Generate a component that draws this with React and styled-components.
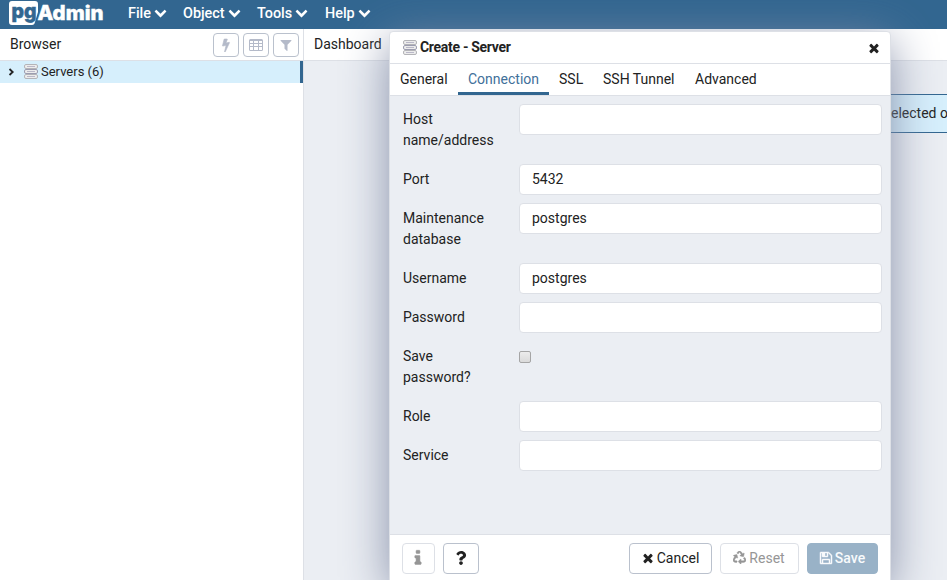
import React from "react";
import styled, { createGlobalStyle } from "styled-components";
import { FaRecycle, FaQuestion } from "react-icons/fa";

const Global = createGlobalStyle`
  * { box-sizing: border-box; }
  body { margin: 0; font: 14px/21px Roboto, sans-serif; color: #222; overflow: hidden; }
`;

const Page = styled.div`
  position: relative;
  width: 947px;
  height: 580px;
  overflow: hidden;
  display: flex;
  flex-direction: column;
  background: #fff;
`;

const MenuBar = styled.header`
  height: 29px;
  flex: none;
  display: flex;
  align-items: flex-start;
  background: #326690;
  color: #fff;
`;

const LogoSvg = styled.svg`
  flex: none;
  width: 128px;
  height: 29px;
`;

const MenuItem = styled.div`
  width: ${(p) => p.$width}px;
  height: 26px;
  display: flex;
  align-items: center;
  gap: 3px;
  font-weight: 500;
  font-size: 14.4px;
`;

const Glyph = styled.svg`
  display: block;
  flex: none;
  width: ${(p) => p.$w || p.$size}px;
  height: ${(p) => p.$size}px;
  fill: currentColor;
`;

const MenuChevron = styled(Glyph)`
  margin-top: -2px;
`;

const Workspace = styled.div`
  flex: 1;
  display: flex;
  min-height: 0;
`;

const Browser = styled.aside`
  width: 304px;
  flex: none;
  border-right: 1px solid #dde0e6;
`;

const PanelHeader = styled.div`
  height: 32px;
  display: flex;
  align-items: center;
  padding: 0 4px 1px 10px;
  background: #fff;
  border-bottom: 1px solid #dde0e6;
`;

const PanelTitle = styled.div`
  flex: 1;
`;

const Tools = styled.div`
  display: flex;
  gap: 4px;
`;

const ToolButton = styled.button`
  width: 26px;
  height: 24px;
  margin-top: 2px;
  padding: 0;
  display: grid;
  place-items: center;
  color: #b4bac9;
  background: #fff;
  border: 1px solid #bac1cd;
  border-radius: 4px;
`;

const TreeRow = styled.div`
  height: 22px;
  display: flex;
  align-items: center;
  padding: 0 0 1px 7px;
  background: #d6effc;
  border-right: 3px solid #326690;
  font-size: 13px;
`;

const TreeLabel = styled.span`
  margin-left: 3px;
`;

const TreeArrow = styled.span`
  width: 17px;
  display: flex;
  color: #222;
`;

const Content = styled.main`
  flex: 1;
  min-width: 0;
  background: #ebeef3;
`;

const Alert = styled.div`
  height: 39px;
  margin: 33px -20px 0 120px;
  padding: 8px 0 0 466px;
  white-space: nowrap;
  background: #d6effc;
  border: 1px solid #326690;
`;

const Dialog = styled.section`
  position: absolute;
  left: 389px;
  top: 31px;
  width: 502px;
  height: 553px;
  display: flex;
  flex-direction: column;
  background: #fff;
  border: 1px solid #dde0e6;
  border-radius: 4px;
  box-shadow: 0 10px 48px -1px #848da7;
`;

const DialogHeader = styled.div`
  height: 32px;
  flex: none;
  display: flex;
  align-items: center;
  padding: 0 9px 0 13px;
  border-bottom: 1px solid #dde0e6;
`;

const DialogTitle = styled.div`
  flex: 1;
  margin-left: 3px;
  font-weight: 700;
  letter-spacing: -0.3px;
`;

const TabBar = styled.nav`
  height: 32px;
  flex: none;
  display: flex;
  border-bottom: 1px solid #dde0e6;
`;

const Tab = styled.div`
  height: 31px;
  width: ${(p) => p.$width}px;
  padding: 5px 0 0 10px;
  white-space: nowrap;
  color: ${(p) => (p.$active ? "#41709a" : "#222")};
  border-bottom: ${(p) => (p.$active ? "3px solid #326690" : "none")};
`;

const Form = styled.div`
  flex: 1;
  display: flex;
  flex-direction: column;
  gap: 8px;
  padding: 8px 8px 0 13px;
  background: #ebeef3;
`;

const Field = styled.label`
  display: grid;
  grid-template-columns: 116px 1fr;
  align-items: start;
`;

const FieldLabel = styled.span`
  width: 100px;
  padding: 5px 0;
`;

const TextBox = styled.input`
  width: 100%;
  height: 31px;
  padding: 0 12px 2px;
  font: 14px Roboto, sans-serif;
  color: #222;
  background: #fff;
  border: 1px solid #dde0e6;
  border-radius: 4px;
  outline: none;
`;

const CheckBox = styled.input`
  appearance: none;
  width: 12px;
  height: 12px;
  margin: 10px 0 0;
  background: linear-gradient(#ececec, #dadada);
  border: 1px solid #a5a5a5;
  border-radius: 2px;
`;

const Footer = styled.div`
  height: 49px;
  flex: none;
  display: flex;
  gap: 8px;
  padding: 8px 12px 0;
  border-top: 1px solid #dde0e6;
`;

const Spacer = styled.div`
  flex: 1;
`;

const variants = {
  normal: "color:#222;background:#fff;border-color:#bac1cd;",
  disabled: "color:#969696;background:#fff;border-color:#dde0e6;",
  primary: "color:#f8fafc;background:#99b2c7;border-color:#99b2c7;",
};

const Button = styled.button`
  width: ${(p) => p.$width}px;
  height: 31px;
  padding: 0 1px 2px 0;
  display: flex;
  align-items: center;
  justify-content: center;
  gap: 2px;
  font: ${(p) => (p.$variant === "primary" ? 500 : 400)} 14px Roboto, sans-serif;
  border: 1px solid;
  border-radius: 4px;
  ${(p) => variants[p.$variant]}
`;

const RecycleIcon = styled(FaRecycle)`
  width: 13px;
  height: 13px;
  margin: 0 1px 1px 0;
  stroke: currentColor;
  stroke-width: 16;
`;

const paths = {
  bolt: "M1333 566q18 20 7 44l-540 1157q-13 25-42 25-4 0-14-2-17-5-25.500-19t-4.500-30l197-808-406 101q-4 1-12 1-18 0-31-11-18-15-13-39l201-825q4-14 16-23t28-9h328q19 0 32 12.500t13 29.500q0 8-5 18l-171 463 396-98q8-2 12-2 19 0 34 15z",
  down: "M1683 808l-742 741q-19 19-45 19t-45-19l-742-741q-19-19-19-45.500t19-45.500l166-165q19-19 45-19t45 19l531 531 531-531q19-19 45-19t45 19l166 165q19 19 19 45.500t-19 45.500z",
  times: "M1490 1322q0 40-28 68l-136 136q-28 28-68 28t-68-28l-294-294-294 294q-28 28-68 28t-68-28l-136-136q-28-28-28-68t28-68l294-294-294-294q-28-28-28-68t28-68l136-136q28-28 68-28t68 28l294 294 294-294q28-28 68-28t68 28l136 136q28 28 28 68t-28 68l-294 294 294 294q28 28 28 68z",
  filter: "M1595 295q17 41-14 70l-493 493v742q0 42-39 59-13 5-25 5-27 0-45-19l-256-256q-19-19-19-45v-486l-493-493q-31-29-14-70 17-39 59-39h1280q42 0 59 39z",
  info: "M1216 1344v128q0 26-19 45t-45 19h-512q-26 0-45-19t-19-45v-128q0-26 19-45t45-19h64v-384h-64q-26 0-45-19t-19-45v-128q0-26 19-45t45-19h384q26 0 45 19t19 45v576h64q26 0 45 19t19 45zm-128-1152v192q0 26-19 45t-45 19h-256q-26 0-45-19t-19-45v-192q0-26 19-45t45-19h256q26 0 45 19t19 45z",
  save: "M512 1536h768v-384h-768v384zm896 0h128v-896q0-14-10-38.500t-20-34.500l-281-281q-10-10-34-20t-39-10v416q0 40-28 68t-68 28h-576q-40 0-68-28t-28-68v-416h-128v1280h128v-416q0-40 28-68t68-28h832q40 0 68 28t28 68v416zm-384-928v-320q0-13-9.500-22.500t-22.500-9.500h-192q-13 0-22.500 9.500t-9.500 22.500v320q0 13 9.500 22.500t22.500 9.500h192q13 0 22.500-9.500t9.500-22.500zm640 32v928q0 40-28 68t-68 28h-1344q-40 0-68-28t-28-68v-1344q0-40 28-68t68-28h928q40 0 88 20t76 48l280 280q28 28 48 76t20 88z",
};

const Icon = ({ name, size = 14, stroke = 0, as: Box = Glyph }) => (
  <Box viewBox="0 0 1792 1792" $size={size}>
    <path d={paths[name]} stroke="currentColor" strokeWidth={stroke} />
  </Box>
);

const TableIcon = () => (
  <Glyph viewBox="0 0 14 12" $w={14} $size={12}>
    <path
      fillRule="evenodd"
      d="M1.500 0h11A1.500 1.500 0 0 1 14 1.500v9a1.500 1.500 0 0 1-1.500 1.500h-11A1.500 1.500 0 0 1 0 10.500v-9A1.500 1.500 0 0 1 1.500 0zM1 2v2h3V2zm4 0v2h4V2zm5 0v2h3V2zM1 5v2h3V5zm4 0v2h4V5zm5 0v2h3V5zM1 8v3h3V8zm4 0v3h4V8zm5 0v3h3V8z"
    />
  </Glyph>
);

const ServerIcon = () => (
  <Glyph viewBox="0 0 14 15" $w={14} $size={15}>
    {[0.5, 5.5, 10.5].map((y, i) => (
      <g key={y}>
        <rect x="0.5" y={y} width="13" height="4" rx="1.5" fill="#ececec" stroke={i === 1 ? "#9c9db0" : "#b4b4b8"} />
        <path d={`M3 ${y + 2}h8`} stroke="#bab8c8" strokeWidth="1" />
      </g>
    ))}
  </Glyph>
);

const Logo = () => (
  <LogoSvg viewBox="0 0 128 29">
    <path d="M12 1h23q3 0 3 3v8l-3 10q-.5 3-3 3H12q-3 0-3-3V4q0-3 3-3z" fill="#fff" />
    <text x="11.500" y="17.500" fontFamily="Inter, sans-serif" fontWeight="800" fontSize="20" fill="#326690" stroke="#326690" strokeWidth="0.600" textLength="25" lengthAdjust="spacingAndGlyphs">pg</text>
    <text x="37.500" y="19.500" fontFamily="Inter, sans-serif" fontWeight="800" fontSize="20" fill="#fff" stroke="#fff" strokeWidth="0.500" textLength="66" lengthAdjust="spacingAndGlyphs">Admin</text>
  </LogoSvg>
);

const menus = [["File", 55], ["Object", 74], ["Tools", 68], ["Help", 60]];
const tabs = [["General", 68], ["Connection", 91], ["SSL", 44], ["SSH Tunnel", 92], ["Advanced", 90]];
const fields = [
  ["Host name/address", ""],
  ["Port", "5432"],
  ["Maintenance database", "postgres"],
  ["Username", "postgres"],
  ["Password", ""],
  ["Save password?", null],
  ["Role", ""],
  ["Service", ""],
];

export default function App() {
  return (
    <>
      <Global />
      <Page>
        <MenuBar>
          <Logo />
          {menus.map(([label, width]) => (
            <MenuItem key={label} $width={width}>
              {label}
              <Icon name="down" size={13} as={MenuChevron} />
            </MenuItem>
          ))}
        </MenuBar>
        <Workspace>
          <Browser>
            <PanelHeader>
              <PanelTitle>Browser</PanelTitle>
              <Tools>
                <ToolButton><Icon name="bolt" stroke={80} /></ToolButton>
                <ToolButton><TableIcon /></ToolButton>
                <ToolButton><Icon name="filter" /></ToolButton>
              </Tools>
            </PanelHeader>
            <TreeRow>
              <TreeArrow>
                <Glyph viewBox="0 0 8 8" $size={8}>
                  <path d="M2.500 1L5.700 4L2.500 7" fill="none" stroke="currentColor" strokeWidth="1.800" />
                </Glyph>
              </TreeArrow>
              <ServerIcon />
              <TreeLabel>Servers (6)</TreeLabel>
            </TreeRow>
          </Browser>
          <Content>
            <PanelHeader>Dashboard</PanelHeader>
            <Alert>elected o</Alert>
          </Content>
        </Workspace>
        <Dialog>
          <DialogHeader>
            <ServerIcon />
            <DialogTitle>Create - Server</DialogTitle>
            <Icon name="times" />
          </DialogHeader>
          <TabBar>
            {tabs.map(([label, width], i) => (
              <Tab key={label} $width={width} $active={i === 1}>{label}</Tab>
            ))}
          </TabBar>
          <Form>
            {fields.map(([label, value]) => (
              <Field key={label}>
                <FieldLabel>{label}</FieldLabel>
                {value === null ? <CheckBox type="checkbox" /> : <TextBox defaultValue={value} />}
              </Field>
            ))}
          </Form>
          <Footer>
            <Button $width={33} $variant="disabled"><Icon name="info" size={18} stroke={50} /></Button>
            <Button $width={36} $variant="normal"><FaQuestion size={14} /></Button>
            <Spacer />
            <Button $width={83} $variant="normal"><Icon name="times" />Cancel</Button>
            <Button $width={79} $variant="disabled"><RecycleIcon />Reset</Button>
            <Button $width={71} $variant="primary"><Icon name="save" stroke={60} />Save</Button>
          </Footer>
        </Dialog>
      </Page>
    </>
  );
}
